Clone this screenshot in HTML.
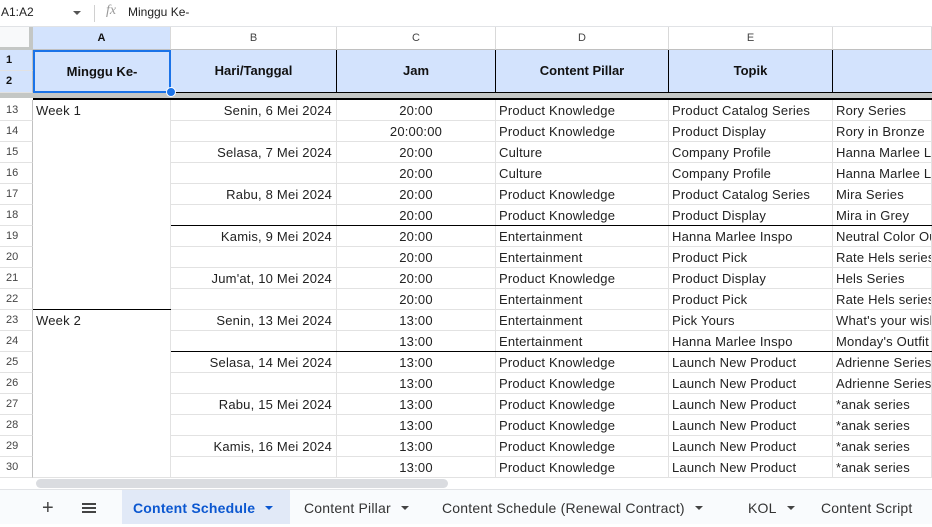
<!DOCTYPE html>
<html><head><meta charset="utf-8">
<style>
*{box-sizing:border-box;margin:0;padding:0}
body{width:932px;height:524px;overflow:hidden;background:#fff;font-family:"Liberation Sans",Arial,sans-serif;position:relative;color:#000}
.abs{position:absolute}
#top{left:0;top:0;width:932px;height:27px;background:#fff;border-bottom:1px solid #e1e3e6}
.ch{position:absolute;top:27px;height:23px;font-size:11px;color:#444;text-align:center;line-height:22px;border-right:1px solid #d9d9d9;border-bottom:1px solid #c0c0c0;background:#fff}
.rh{position:absolute;left:0;width:33px;font-size:11px;color:#444;padding-left:6px;border-bottom:1px solid #e2e2e2;border-right:1px solid #c0c0c0;background:#fff}
.row{position:absolute;left:33px;height:21px;width:899px;font-size:13px;color:#222;letter-spacing:0.2px}
.c{position:absolute;top:0;height:21px;line-height:21px;border-right:1px solid #e2e2e2;border-bottom:1px solid #e2e2e2;white-space:nowrap;overflow:hidden;padding:0 3px}
.r{text-align:right;padding-right:4px}.m{text-align:center}
.hd{position:absolute;top:50px;height:43px;background:#d3e3fd;border-right:1px solid #000;border-bottom:1px solid #000;font-weight:bold;font-size:13px;text-align:center;line-height:42px;color:#111}
.bl{position:absolute;height:1px;background:#000}
.tab{position:absolute;top:489px;height:35px;line-height:38px;font-size:14px;color:#333;letter-spacing:0.2px}
.tri{display:inline-block;width:0;height:0;border-left:4px solid transparent;border-right:4px solid transparent;border-top:4px solid #444;vertical-align:middle;margin-left:10px;margin-top:-2px}
</style></head><body>
<div id="top" class="abs">
 <div class="abs" style="left:1px;top:5px;font-size:12px;color:#222">A1:A2</div>
 <div class="abs" style="left:73px;top:11px;border-left:4px solid transparent;border-right:4px solid transparent;border-top:4px solid #555"></div>
 <div class="abs" style="left:94px;top:5px;width:1px;height:17px;background:#d0d0d0"></div>
 <div class="abs" style="left:106px;top:3px;font-size:14px;color:#999;font-style:italic;font-family:'Liberation Serif',serif">fx</div>
 <div class="abs" style="left:128px;top:5px;font-size:12px;color:#222">Minggu Ke-</div>
</div>
<div class="abs" style="left:0;top:27px;width:33px;height:23px;background:#f8f9fa;border-right:4px solid #c4c7c5;border-bottom:3px solid #c4c7c5"></div>
<div class="ch" style="left:33px;width:138px;background:#d3e3fd;color:#111;font-weight:bold">A</div>
<div class="ch" style="left:171px;width:166px">B</div>
<div class="ch" style="left:337px;width:159px">C</div>
<div class="ch" style="left:496px;width:173px">D</div>
<div class="ch" style="left:669px;width:164px">E</div>
<div class="ch" style="left:833px;width:99px"></div>
<div class="rh" style="top:50px;height:21px;line-height:20px;background:#d3e3fd;color:#111;font-weight:bold">1</div>
<div class="rh" style="top:71px;height:22px;line-height:20px;background:#d3e3fd;color:#111;font-weight:bold">2</div>
<div class="hd" style="left:171px;width:166px">Hari/Tanggal</div>
<div class="hd" style="left:337px;width:159px">Jam</div>
<div class="hd" style="left:496px;width:173px">Content Pillar</div>
<div class="hd" style="left:669px;width:164px">Topik</div>
<div class="hd" style="left:833px;width:99px;border-right:none"></div>
<div class="hd" style="left:33px;width:138px;border:2px solid #1a73e8;line-height:39px">Minggu Ke-</div>
<div class="abs" style="left:166px;top:87px;width:10px;height:10px;border-radius:50%;background:#1a73e8;border:1px solid #fff;z-index:3"></div>
<div class="abs" style="left:0;top:93px;width:932px;height:5px;background:#c4c7c5"></div>
<div class="bl" style="left:33px;top:98px;width:899px;height:2px"></div>

<div class="rh" style="top:100px;height:21px;line-height:21px">13</div>
<div class="rh" style="top:121px;height:21px;line-height:21px">14</div>
<div class="rh" style="top:142px;height:21px;line-height:21px">15</div>
<div class="rh" style="top:163px;height:21px;line-height:21px">16</div>
<div class="rh" style="top:184px;height:21px;line-height:21px">17</div>
<div class="rh" style="top:205px;height:21px;line-height:21px">18</div>
<div class="rh" style="top:226px;height:21px;line-height:21px">19</div>
<div class="rh" style="top:247px;height:21px;line-height:21px">20</div>
<div class="rh" style="top:268px;height:21px;line-height:21px">21</div>
<div class="rh" style="top:289px;height:21px;line-height:21px">22</div>
<div class="rh" style="top:310px;height:21px;line-height:21px">23</div>
<div class="rh" style="top:331px;height:21px;line-height:21px">24</div>
<div class="rh" style="top:352px;height:21px;line-height:21px">25</div>
<div class="rh" style="top:373px;height:21px;line-height:21px">26</div>
<div class="rh" style="top:394px;height:21px;line-height:21px">27</div>
<div class="rh" style="top:415px;height:21px;line-height:21px">28</div>
<div class="rh" style="top:436px;height:21px;line-height:21px">29</div>
<div class="rh" style="top:457px;height:21px;line-height:21px">30</div>

<div class="row" style="top:100px"><div class="c" style="left:0;width:138px;border-bottom:none">Week 1</div><div class="c r" style="left:138px;width:166px">Senin, 6 Mei 2024</div><div class="c m" style="left:304px;width:159px">20:00</div><div class="c" style="left:463px;width:173px">Product Knowledge</div><div class="c" style="left:636px;width:164px">Product Catalog Series</div><div class="c" style="left:800px;width:99px">Rory Series</div></div>
<div class="row" style="top:121px"><div class="c" style="left:0;width:138px;border-bottom:none"></div><div class="c r" style="left:138px;width:166px"></div><div class="c m" style="left:304px;width:159px">20:00:00</div><div class="c" style="left:463px;width:173px">Product Knowledge</div><div class="c" style="left:636px;width:164px">Product Display</div><div class="c" style="left:800px;width:99px">Rory in Bronze</div></div>
<div class="row" style="top:142px"><div class="c" style="left:0;width:138px;border-bottom:none"></div><div class="c r" style="left:138px;width:166px">Selasa, 7 Mei 2024</div><div class="c m" style="left:304px;width:159px">20:00</div><div class="c" style="left:463px;width:173px">Culture</div><div class="c" style="left:636px;width:164px">Company Profile</div><div class="c" style="left:800px;width:99px">Hanna Marlee L</div></div>
<div class="row" style="top:163px"><div class="c" style="left:0;width:138px;border-bottom:none"></div><div class="c r" style="left:138px;width:166px"></div><div class="c m" style="left:304px;width:159px">20:00</div><div class="c" style="left:463px;width:173px">Culture</div><div class="c" style="left:636px;width:164px">Company Profile</div><div class="c" style="left:800px;width:99px">Hanna Marlee L</div></div>
<div class="row" style="top:184px"><div class="c" style="left:0;width:138px;border-bottom:none"></div><div class="c r" style="left:138px;width:166px">Rabu, 8 Mei 2024</div><div class="c m" style="left:304px;width:159px">20:00</div><div class="c" style="left:463px;width:173px">Product Knowledge</div><div class="c" style="left:636px;width:164px">Product Catalog Series</div><div class="c" style="left:800px;width:99px">Mira Series</div></div>
<div class="row" style="top:205px"><div class="c" style="left:0;width:138px;border-bottom:none"></div><div class="c r" style="left:138px;width:166px"></div><div class="c m" style="left:304px;width:159px">20:00</div><div class="c" style="left:463px;width:173px">Product Knowledge</div><div class="c" style="left:636px;width:164px">Product Display</div><div class="c" style="left:800px;width:99px">Mira in Grey</div></div>
<div class="row" style="top:226px"><div class="c" style="left:0;width:138px;border-bottom:none"></div><div class="c r" style="left:138px;width:166px">Kamis, 9 Mei 2024</div><div class="c m" style="left:304px;width:159px">20:00</div><div class="c" style="left:463px;width:173px">Entertainment</div><div class="c" style="left:636px;width:164px">Hanna Marlee Inspo</div><div class="c" style="left:800px;width:99px">Neutral Color Ou</div></div>
<div class="row" style="top:247px"><div class="c" style="left:0;width:138px;border-bottom:none"></div><div class="c r" style="left:138px;width:166px"></div><div class="c m" style="left:304px;width:159px">20:00</div><div class="c" style="left:463px;width:173px">Entertainment</div><div class="c" style="left:636px;width:164px">Product Pick</div><div class="c" style="left:800px;width:99px">Rate Hels series</div></div>
<div class="row" style="top:268px"><div class="c" style="left:0;width:138px;border-bottom:none"></div><div class="c r" style="left:138px;width:166px">Jum'at, 10 Mei 2024</div><div class="c m" style="left:304px;width:159px">20:00</div><div class="c" style="left:463px;width:173px">Product Knowledge</div><div class="c" style="left:636px;width:164px">Product Display</div><div class="c" style="left:800px;width:99px">Hels Series</div></div>
<div class="row" style="top:289px"><div class="c" style="left:0;width:138px;border-bottom:none"></div><div class="c r" style="left:138px;width:166px"></div><div class="c m" style="left:304px;width:159px">20:00</div><div class="c" style="left:463px;width:173px">Entertainment</div><div class="c" style="left:636px;width:164px">Product Pick</div><div class="c" style="left:800px;width:99px">Rate Hels series</div></div>
<div class="row" style="top:310px"><div class="c" style="left:0;width:138px;border-bottom:none">Week 2</div><div class="c r" style="left:138px;width:166px">Senin, 13 Mei 2024</div><div class="c m" style="left:304px;width:159px">13:00</div><div class="c" style="left:463px;width:173px">Entertainment</div><div class="c" style="left:636px;width:164px">Pick Yours</div><div class="c" style="left:800px;width:99px">What's your wisl</div></div>
<div class="row" style="top:331px"><div class="c" style="left:0;width:138px;border-bottom:none"></div><div class="c r" style="left:138px;width:166px"></div><div class="c m" style="left:304px;width:159px">13:00</div><div class="c" style="left:463px;width:173px">Entertainment</div><div class="c" style="left:636px;width:164px">Hanna Marlee Inspo</div><div class="c" style="left:800px;width:99px">Monday's Outfit</div></div>
<div class="row" style="top:352px"><div class="c" style="left:0;width:138px;border-bottom:none"></div><div class="c r" style="left:138px;width:166px">Selasa, 14 Mei 2024</div><div class="c m" style="left:304px;width:159px">13:00</div><div class="c" style="left:463px;width:173px">Product Knowledge</div><div class="c" style="left:636px;width:164px">Launch New Product</div><div class="c" style="left:800px;width:99px">Adrienne Series</div></div>
<div class="row" style="top:373px"><div class="c" style="left:0;width:138px;border-bottom:none"></div><div class="c r" style="left:138px;width:166px"></div><div class="c m" style="left:304px;width:159px">13:00</div><div class="c" style="left:463px;width:173px">Product Knowledge</div><div class="c" style="left:636px;width:164px">Launch New Product</div><div class="c" style="left:800px;width:99px">Adrienne Series</div></div>
<div class="row" style="top:394px"><div class="c" style="left:0;width:138px;border-bottom:none"></div><div class="c r" style="left:138px;width:166px">Rabu, 15 Mei 2024</div><div class="c m" style="left:304px;width:159px">13:00</div><div class="c" style="left:463px;width:173px">Product Knowledge</div><div class="c" style="left:636px;width:164px">Launch New Product</div><div class="c" style="left:800px;width:99px">*anak series</div></div>
<div class="row" style="top:415px"><div class="c" style="left:0;width:138px;border-bottom:none"></div><div class="c r" style="left:138px;width:166px"></div><div class="c m" style="left:304px;width:159px">13:00</div><div class="c" style="left:463px;width:173px">Product Knowledge</div><div class="c" style="left:636px;width:164px">Launch New Product</div><div class="c" style="left:800px;width:99px">*anak series</div></div>
<div class="row" style="top:436px"><div class="c" style="left:0;width:138px;border-bottom:none"></div><div class="c r" style="left:138px;width:166px">Kamis, 16 Mei 2024</div><div class="c m" style="left:304px;width:159px">13:00</div><div class="c" style="left:463px;width:173px">Product Knowledge</div><div class="c" style="left:636px;width:164px">Launch New Product</div><div class="c" style="left:800px;width:99px">*anak series</div></div>
<div class="row" style="top:457px"><div class="c" style="left:0;width:138px"></div><div class="c r" style="left:138px;width:166px"></div><div class="c m" style="left:304px;width:159px">13:00</div><div class="c" style="left:463px;width:173px">Product Knowledge</div><div class="c" style="left:636px;width:164px">Launch New Product</div><div class="c" style="left:800px;width:99px">*anak series</div></div>

<div class="bl" style="left:171px;top:225px;width:761px"></div>
<div class="bl" style="left:33px;top:309px;width:138px"></div>
<div class="bl" style="left:171px;top:351px;width:761px"></div>

<div class="abs" style="left:0;top:478px;width:932px;height:11px;background:#fff"></div>
<div class="abs" style="left:36px;top:479px;width:412px;height:9px;border-radius:5px;background:#dadce0"></div>
<div class="abs" style="left:0;top:489px;width:932px;height:35px;background:#f9fbfd;border-top:1px solid #e1e3e6"></div>
<div class="abs" style="left:42px;top:497px;font-size:20px;color:#444;line-height:22px">+</div>
<div class="abs" style="left:82px;top:503px;width:14px;height:2px;background:#444;box-shadow:0 4px 0 #444,0 8px 0 #444"></div>
<div class="abs" style="left:122px;top:490px;width:168px;height:34px;background:#e1e9f7"></div>
<div class="tab" style="left:133px;color:#0b57d0;font-weight:bold">Content Schedule<span class="tri" style="border-top-color:#0b57d0"></span></div>
<div class="tab" style="left:304px">Content Pillar<span class="tri"></span></div>
<div class="tab" style="left:442px">Content Schedule (Renewal Contract)<span class="tri"></span></div>
<div class="tab" style="left:748px">KOL<span class="tri"></span></div>
<div class="tab" style="left:821px">Content Script</div>
</body></html>
